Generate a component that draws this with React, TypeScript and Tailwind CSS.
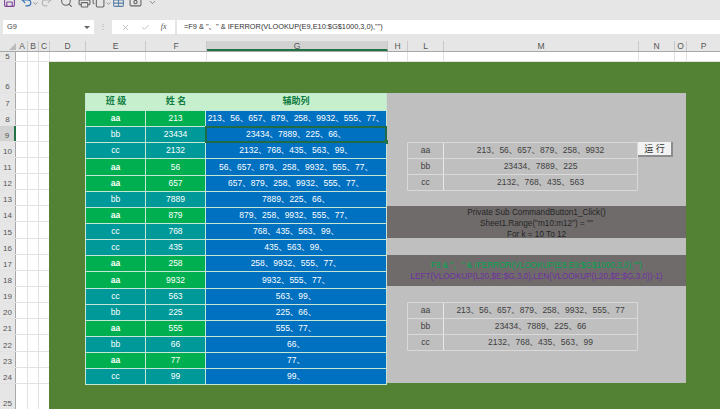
import { Camera, Check, ChevronDown, Copy, Printer, Redo2, Save, Search, Table, Undo2, X } from 'lucide-react';

const columns = [
  { label: 'A', width: 'w-[11px]' },
  { label: 'B', width: 'w-[11px]' },
  { label: 'C', width: 'w-[11px]' },
  { label: 'D', width: 'w-[36px]' },
  { label: 'E', width: 'w-[60px]' },
  { label: 'F', width: 'w-[61px]' },
  { label: 'G', width: 'w-[181px]' },
  { label: 'H', width: 'w-[20px]' },
  { label: 'L', width: 'w-[36px]' },
  { label: 'M', width: 'w-[195px]' },
  { label: 'N', width: 'w-[36px]' },
  { label: 'O', width: 'w-[12px]' },
  { label: 'P', width: 'w-[34px]' },
];

const rows = [
  ['aa', '213', '213、56、657、879、258、9932、555、77、'],
  ['bb', '23434', '23434、7889、225、66、'],
  ['cc', '2132', '2132、768、435、563、99、'],
  ['aa', '56', '56、657、879、258、9932、555、77、'],
  ['aa', '657', '657、879、258、9932、555、77、'],
  ['bb', '7889', '7889、225、66、'],
  ['aa', '879', '879、258、9932、555、77、'],
  ['cc', '768', '768、435、563、99、'],
  ['cc', '435', '435、563、99、'],
  ['aa', '258', '258、9932、555、77、'],
  ['aa', '9932', '9932、555、77、'],
  ['cc', '563', '563、99、'],
  ['bb', '225', '225、66、'],
  ['aa', '555', '555、77、'],
  ['bb', '66', '66、'],
  ['aa', '77', '77、'],
  ['cc', '99', '99、'],
];

const rowHeaders = [
  { n: 6, h: 'h-[31px]' },
  { n: 7, h: 'h-[16.5px]' },
  ...Array.from({ length: 17 }, (_, i) => ({ n: i + 8, h: 'h-[16.15px]' })),
  { n: 25, h: 'h-[26px]' },
];

const firstResult = [
  ['aa', '213、56、657、879、258、9932'],
  ['bb', '23434、7889、225'],
  ['cc', '2132、768、435、563'],
];

const secondResult = [
  ['aa', '213、56、657、879、258、9932、555、77'],
  ['bb', '23434、7889、225、66'],
  ['cc', '2132、768、435、563、99'],
];

const ResultTable = ({ data }: { data: string[][] }) => (
  <div className="w-[231px] h-[49px] shrink-0 flex flex-col border border-[#d9d9d9] rounded-[1px]">
    {data.map((row, i) => (
      <div key={row[0]} className={`flex flex-1 items-center text-[8.5px] text-[#404040] ${i > 0 ? 'border-t border-[#d9d9d9]' : ''}`}>
        <div className="w-[36px] shrink-0 h-full flex items-center justify-center border-r border-[#e8e8e8]">{row[0]}</div>
        <div className="flex-1 text-center whitespace-nowrap">{row[1]}</div>
      </div>
    ))}
  </div>
);

const App = () => {
  return (
    <div className="w-[720px] h-[409px] overflow-hidden bg-white font-['Liberation_Sans','Noto_Sans_CJK_SC',sans-serif]">
      {/* toolbar, only the lower part of the icons is visible */}
      <div className="h-[20px] bg-[#e6e6e6] overflow-hidden flex items-start pl-[3px] text-[#666]">
        <Save size={13} className="shrink-0 -mt-[5px] text-[#7b3f98]" />
        <Undo2 size={13} className="shrink-0 -mt-[5px] ml-[4px] text-[#2b6cb0]" />
        <ChevronDown size={7} className="shrink-0 -ml-[1px]" />
        <Redo2 size={13} className="shrink-0 -mt-[5px] ml-[1px] text-[#b5b5b5]" />
        <Search size={13} className="shrink-0 -mt-[5px] ml-[7px]" />
        <Printer size={13} className="shrink-0 -mt-[5px] ml-[5px]" />
        <Copy size={13} className="shrink-0 -mt-[5px] ml-[1px]" />
        <ChevronDown size={7} />
        <Table size={13} className="shrink-0 -mt-[5px] text-[#5b7fa6]" />
        <Camera size={13} className="shrink-0 -mt-[5px] ml-[4px]" />
        <ChevronDown size={9} className="shrink-0 ml-[6px] -mt-[2px]" />
      </div>

      {/* formula bar */}
      <div className="h-[21px] bg-[#e6e6e6] flex items-start pl-[3px] text-[#444]">
        <div className="w-[91px] h-[14px] bg-white flex items-center justify-between px-[4px] text-[7.4px]">
          <span>G9</span>
          <span className="w-0 h-0 border-x-[3px] border-x-transparent border-t-[3px] border-t-[#666]" />
        </div>
        <div className="w-[18px] text-center text-[8px] leading-[14px] text-[#aaa]">⋮</div>
        <div className="w-[63px] h-[14px] bg-white flex items-center justify-around px-[3px] text-[8px]">
          <X size={9} className="text-[#b0b0b0]" />
          <Check size={9} className="text-[#b0b0b0]" />
          <span className="text-[#555] italic font-['Liberation_Serif',serif]">fx</span>
        </div>
        <div className="flex-1 h-[14px] ml-[2px] bg-white flex items-center pl-[7px] text-[7.4px] text-[#333] whitespace-nowrap">
          =F9 &amp; "、" &amp; IFERROR(VLOOKUP(E9,E10:$G$1000,3,0),"")
        </div>
      </div>

      {/* column headers */}
      <div className="h-[11px] bg-[#e6e6e6] border-b border-[#a8a8a8] flex text-[8.5px] text-[#555] leading-[10px]">
        <div className="w-[17px] shrink-0 flex justify-end items-end">
          <span className="w-0 h-0 border-l-[7px] border-l-transparent border-b-[7px] border-b-[#bbb] mr-[1px] mb-[1px]" />
        </div>
        {columns.map((c) => (
          <div
            key={c.label}
            className={`${c.width} shrink-0 text-center border-r border-[#c8c8c8] ${c.label === 'G' ? 'bg-[#d2d2d2] border-b-2 border-b-[#217346]' : ''}`}
          >
            {c.label}
          </div>
        ))}
      </div>

      {/* row 5 */}
      <div className="h-[10px] flex border-b border-[#e2e2e2]">
        <div className="w-[16px] shrink-0 bg-[#e6e6e6] border-r border-[#a8a8a8] text-[8px] leading-[10px] text-[#555] text-center">5</div>
        {columns.map((c, i) => (
          <div key={c.label} className={`${c.width} shrink-0 border-r border-[#e2e2e2] ${i === 0 ? 'ml-[1px]' : ''}`} />
        ))}
      </div>

      <div className="flex">
        <div className="w-[49px] shrink-0">
          {rowHeaders.map((r) => (
            <div key={r.n} className={`${r.h} flex border-b border-[#e2e2e2]`}>
              <div className={`w-[16px] shrink-0 flex items-end justify-center text-[8px] leading-[10px] text-[#555] border-r ${r.n === 9 ? 'bg-[#d2d2d2] border-r-2 border-r-[#217346]' : 'bg-[#e6e6e6] border-[#a8a8a8]'}`}>
                {r.n}
              </div>
              <div className="w-[12px] shrink-0 border-r border-[#e2e2e2]" />
              <div className="w-[11px] shrink-0 border-r border-[#e2e2e2]" />
              <div className="w-[10px] shrink-0" />
            </div>
          ))}
        </div>

        {/* green sheet area */}
        <div className="flex-1 bg-[#548235] pl-[36px] pt-[31px] h-[347px] flex items-start">
          <div className="w-[302px] shrink-0 text-[8.5px] text-white border border-[#c5e5d5]">
            <div className="flex h-[16px] bg-[#c6efce] text-[#107c41] text-[9px] font-bold items-center text-center">
              <div className="w-[60px] shrink-0">班 级</div>
              <div className="w-[60px] shrink-0">姓 名</div>
              <div className="flex-1">辅助列</div>
            </div>
            {rows.map((row, i) => (
              <div key={row[1]} className="flex h-[16.15px] items-stretch text-center border-t border-[#c5e5d5]">
                <div className={`w-[60px] shrink-0 flex items-center justify-center border-r border-[#c5e5d5] ${row[0] === 'aa' ? 'bg-[#00b050] font-bold' : 'bg-[#009999]'}`}>{row[0]}</div>
                <div className={`w-[60px] shrink-0 flex items-center justify-center border-r border-[#c5e5d5] ${row[0] === 'aa' ? 'bg-[#00b050]' : 'bg-[#009999]'}`}>{row[1]}</div>
                <div className={`relative flex-1 flex items-center justify-center bg-[#0070c0] whitespace-nowrap ${i === 1 ? 'outline-2 outline-[#1e6b45] -outline-offset-1' : ''}`}>
                  {row[2]}
                  {i === 1 && <span className="absolute -right-[2px] -bottom-[2px] w-[4px] h-[4px] bg-[#217346]" />}
                </div>
              </div>
            ))}
          </div>

          {/* gray notes panel */}
          <div className="w-[299px] shrink-0 h-[290px] bg-[#bfbfbf] pt-[49px] flex flex-col">
            <div className="flex items-start pl-[20px]">
              <ResultTable data={firstResult} />
              <button className="w-[35px] h-[15px] bg-[#f2f2f2] border-r-2 border-b-2 border-[#8c8c8c] text-[9px] leading-[12px] text-[#333]">
                运 行
              </button>
            </div>
            <div className="mt-[15px] h-[32px] shrink-0 bg-[#6f6b6b] text-[8.2px] leading-[11px] text-[#262626] text-center pt-[1px]">
              <div>Private Sub CommandButton1_Click()</div>
              <div>Sheet1.Range("m10:m12") = ""</div>
              <div>For k = 10 To 12</div>
            </div>
            <div className="mt-[17px] h-[31px] shrink-0 bg-[#6f6b6b] text-[8.2px] leading-[11px] text-center pt-[5px] whitespace-nowrap">
              <div className="text-[#00a650]">F8 &amp; "、" &amp; IFERROR(VLOOKUP(E8,E9:$G$1000,3,0),"")</div>
              <div className="text-[#7030a0]">LEFT(VLOOKUP(L20,$E:$G,3,0),LEN(VLOOKUP(L20,$E:$G,3,0))-1)</div>
            </div>
            <div className="mt-[16px] pl-[20px]">
              <ResultTable data={secondResult} />
            </div>
          </div>
        </div>
      </div>
    </div>
  );
};

export default App;
